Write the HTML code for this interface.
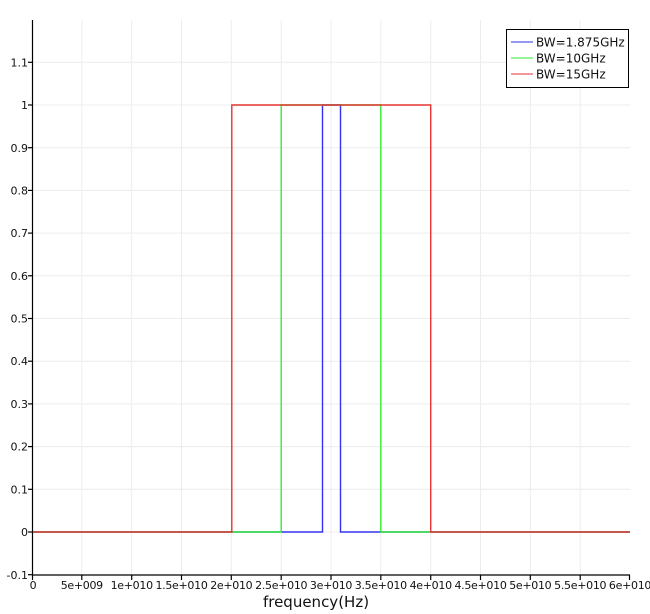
<!DOCTYPE html>
<html><head><meta charset="utf-8"><style>
html,body{margin:0;padding:0;background:#fff;}
svg{display:block;font-family:"DejaVu Sans","Liberation Sans",sans-serif;}
</style></head><body>
<svg width="650" height="614" viewBox="0 0 650 614" xmlns="http://www.w3.org/2000/svg">
<rect width="650" height="614" fill="#fff"/>
<g stroke="#ececec" stroke-width="1">
<line x1="81.8" y1="20" x2="81.8" y2="575"/><line x1="131.7" y1="20" x2="131.7" y2="575"/>
<line x1="181.5" y1="20" x2="181.5" y2="575"/><line x1="231.3" y1="20" x2="231.3" y2="575"/>
<line x1="281.2" y1="20" x2="281.2" y2="575"/><line x1="331" y1="20" x2="331" y2="575"/>
<line x1="380.8" y1="20" x2="380.8" y2="575"/><line x1="430.7" y1="20" x2="430.7" y2="575"/>
<line x1="480.5" y1="20" x2="480.5" y2="575"/><line x1="530.3" y1="20" x2="530.3" y2="575"/>
<line x1="580.2" y1="20" x2="580.2" y2="575"/>
<line x1="32" y1="62.3" x2="630" y2="62.3"/><line x1="32" y1="105" x2="630" y2="105"/>
<line x1="32" y1="147.7" x2="630" y2="147.7"/><line x1="32" y1="190.4" x2="630" y2="190.4"/>
<line x1="32" y1="233.1" x2="630" y2="233.1"/><line x1="32" y1="275.8" x2="630" y2="275.8"/>
<line x1="32" y1="318.5" x2="630" y2="318.5"/><line x1="32" y1="361.2" x2="630" y2="361.2"/>
<line x1="32" y1="403.9" x2="630" y2="403.9"/><line x1="32" y1="446.6" x2="630" y2="446.6"/>
<line x1="32" y1="489.3" x2="630" y2="489.3"/><line x1="32" y1="532" x2="630" y2="532"/>
</g>
<g fill="none" stroke-width="1.4">
<polyline stroke="#3333ee" points="32,532 322.5,532 322.5,105 340.5,105 340.5,532 630,532"/>
<polyline stroke="#33ee33" points="32,532 281.2,532 281.2,105 380.8,105 380.8,532 630,532"/>
<polyline stroke="#e63333" points="32,532 231.8,532 231.8,105 430.7,105 430.7,532 630,532"/>
</g>
<g stroke="#000" stroke-width="1.2">
<line x1="32.5" y1="20" x2="32.5" y2="575"/>
<line x1="32" y1="575" x2="630" y2="575"/>
<line x1="28" y1="62.3" x2="32" y2="62.3"/><line x1="28" y1="105" x2="32" y2="105"/>
<line x1="28" y1="147.7" x2="32" y2="147.7"/><line x1="28" y1="190.4" x2="32" y2="190.4"/>
<line x1="28" y1="233.1" x2="32" y2="233.1"/><line x1="28" y1="275.8" x2="32" y2="275.8"/>
<line x1="28" y1="318.5" x2="32" y2="318.5"/><line x1="28" y1="361.2" x2="32" y2="361.2"/>
<line x1="28" y1="403.9" x2="32" y2="403.9"/><line x1="28" y1="446.6" x2="32" y2="446.6"/>
<line x1="28" y1="489.3" x2="32" y2="489.3"/><line x1="28" y1="532" x2="32" y2="532"/>
<line x1="28" y1="574.7" x2="32" y2="574.7"/>
<line x1="32.5" y1="575" x2="32.5" y2="580"/><line x1="81.8" y1="575" x2="81.8" y2="580"/>
<line x1="131.7" y1="575" x2="131.7" y2="580"/><line x1="181.5" y1="575" x2="181.5" y2="580"/>
<line x1="231.3" y1="575" x2="231.3" y2="580"/><line x1="281.2" y1="575" x2="281.2" y2="580"/>
<line x1="331" y1="575" x2="331" y2="580"/><line x1="380.8" y1="575" x2="380.8" y2="580"/>
<line x1="430.7" y1="575" x2="430.7" y2="580"/><line x1="480.5" y1="575" x2="480.5" y2="580"/>
<line x1="530.3" y1="575" x2="530.3" y2="580"/><line x1="580.2" y1="575" x2="580.2" y2="580"/>
<line x1="629.5" y1="575" x2="629.5" y2="580"/>
</g>
<g font-size="11" fill="#111" text-anchor="end">
<text x="28" y="66.5">1.1</text><text x="28" y="109">1</text><text x="28" y="152">0.9</text>
<text x="28" y="194.5">0.8</text><text x="28" y="237">0.7</text><text x="28" y="280">0.6</text>
<text x="28" y="322.5">0.5</text><text x="28" y="365">0.4</text><text x="28" y="408">0.3</text>
<text x="28" y="450.5">0.2</text><text x="28" y="493.5">0.1</text><text x="28" y="536">0</text>
<text x="28" y="579">-0.1</text>
</g>
<g font-size="11" fill="#111" text-anchor="middle" letter-spacing="-0.3">
<text x="33" y="589">0</text><text x="81.8" y="589">5e+009</text><text x="131.7" y="589">1e+010</text>
<text x="181.5" y="589">1.5e+010</text><text x="231.3" y="589">2e+010</text><text x="281.2" y="589">2.5e+010</text>
<text x="331" y="589">3e+010</text><text x="380.8" y="589">3.5e+010</text><text x="430.7" y="589">4e+010</text>
<text x="480.5" y="589">4.5e+010</text><text x="530.3" y="589">5e+010</text><text x="580.2" y="589">5.5e+010</text>
<text x="630" y="589">6e+010</text>
</g>
<text x="316" y="607" font-size="15" fill="#111" text-anchor="middle">frequency(Hz)</text>
<rect x="506.5" y="29.5" width="122" height="58" fill="#fff" stroke="#000" stroke-width="1"/>
<line x1="511" y1="42" x2="533" y2="42" stroke="#7777ee" stroke-width="1.5"/>
<line x1="511" y1="58" x2="533" y2="58" stroke="#77ee77" stroke-width="1.5"/>
<line x1="511" y1="74" x2="533" y2="74" stroke="#ee7777" stroke-width="1.5"/>
<g font-size="12" fill="#111">
<text x="536" y="46.5">BW=1.875GHz</text><text x="536" y="62.5">BW=10GHz</text><text x="536" y="78.5">BW=15GHz</text>
</g>
</svg>
</body></html>
